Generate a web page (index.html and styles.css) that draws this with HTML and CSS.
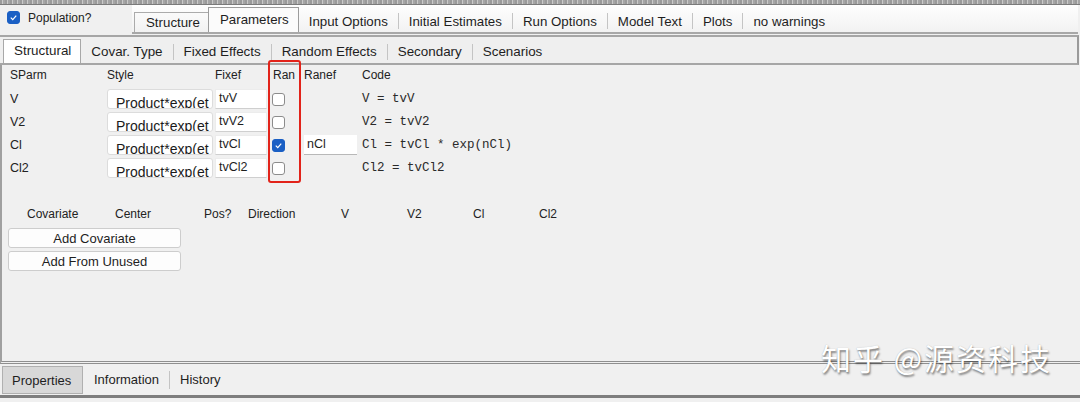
FILE: index.html
```html
<!DOCTYPE html>
<html>
<head>
<meta charset="utf-8">
<link rel="stylesheet" href="styles.css">
</head>
<body>
<div class="app">
  <div class="topline"></div>
  <div class="toprow">
    <div class="pop">
      <span class="cb checked small"><svg viewBox="0 0 12 12"><path d="M3 6.2 L5.2 8.3 L9 4" fill="none" stroke="#fff" stroke-width="1.3"/></svg></span>
      <span class="poplabel">Population?</span>
    </div>
    <div class="tabstrip">
      <div class="ttab side">Structure</div>
      <div class="ttab sel">Parameters</div>
      <div class="ttab">Input Options</div><span class="sep"></span>
      <div class="ttab">Initial Estimates</div><span class="sep"></span>
      <div class="ttab">Run Options</div><span class="sep"></span>
      <div class="ttab">Model Text</div><span class="sep"></span>
      <div class="ttab">Plots</div><span class="sep"></span>
      <div class="ttab">no warnings</div>
    </div>
  </div>
  <div class="subrow">
    <div class="stab sel">Structural</div>
    <div class="stab">Covar. Type</div><span class="sep"></span>
    <div class="stab">Fixed Effects</div><span class="sep"></span>
    <div class="stab">Random Effects</div><span class="sep"></span>
    <div class="stab">Secondary</div><span class="sep"></span>
    <div class="stab">Scenarios</div>
  </div>
  <div class="panel">
    <div class="grid">
      <div class="hd">SParm</div><div class="hd">Style</div><div class="hd">Fixef</div><div class="hd ran">Ran</div><div class="hd">Ranef</div><div class="hd">Code</div>

      <div class="lbl">V</div><div><div class="style">Product*exp(et</div></div><div><div class="fix">tvV</div></div><div><span class="cb"></span></div><div></div><div class="code">V = tvV</div>

      <div class="lbl">V2</div><div><div class="style">Product*exp(et</div></div><div><div class="fix">tvV2</div></div><div><span class="cb"></span></div><div></div><div class="code">V2 = tvV2</div>

      <div class="lbl">Cl</div><div><div class="style">Product*exp(et</div></div><div><div class="fix">tvCl</div></div><div><span class="cb checked"><svg viewBox="0 0 12 12"><path d="M3 6.2 L5.2 8.3 L9 4" fill="none" stroke="#fff" stroke-width="1.3"/></svg></span></div><div><div class="ranef">nCl</div></div><div class="code">Cl = tvCl * exp(nCl)</div>

      <div class="lbl">Cl2</div><div><div class="style">Product*exp(et</div></div><div><div class="fix">tvCl2</div></div><div><span class="cb"></span></div><div></div><div class="code">Cl2 = tvCl2</div>
    </div>
    <div class="highlight"></div>

    <div class="covhead">
      <span>Covariate</span><span>Center</span><span>Pos?</span><span>Direction</span><span>V</span><span>V2</span><span>Cl</span><span>Cl2</span>
    </div>
    <div class="btns">
      <button class="btn">Add Covariate</button>
      <button class="btn">Add From Unused</button>
    </div>
  </div>
  <div class="bottomrow">
    <div class="btab sel">Properties</div>
    <div class="btab">Information</div><span class="sep"></span>
    <div class="btab">History</div>
  </div>
  <div class="watermark">知乎 @源资科技</div>
</div>
</body>
</html>
```
FILE: styles.css
```css
* { box-sizing: border-box; }
html, body { margin: 0; padding: 0; }
body {
  width: 1080px;
  height: 402px;
  overflow: hidden;
  background: #f0f0f0;
  font-family: "Liberation Sans", Arial, sans-serif;
  font-size: 13px;
  color: #1e1e1e;
}
.app { position: relative; width: 1080px; height: 402px; }

.topline {
  height: 5px;
  background: repeating-linear-gradient(90deg, #9a9a9a 0 2px, #c9c9c9 2px 3px, #a5a5a5 3px 5px);
  border-bottom: 1px solid #7a7a7a;
}

.toprow { display: flex; height: 29px; }
.pop { width: 132px; display: flex; align-items: center; padding-left: 7px; gap: 8px; padding-bottom: 4px; }
.poplabel { font-size: 12px; color: #222; }

.tabstrip {
  flex: 1;
  display: flex;
  align-items: flex-end;
  margin-right: 2px;
  background: linear-gradient(#fefefe, #f2f2f2);
  border-bottom: 2px solid #a8a8a8;
  font-size: 13.3px;
}
.ttab { height: 20px; line-height: 19px; padding: 0 10px; white-space: nowrap; }
.ttab.side {
  margin-left: 2px;
  height: 20px;
  padding: 0 8px 0 11px;
  border-left: 1px solid #ababab;
  border-top: 1px solid #ababab;
}
.ttab.sel {
  height: 25px;
  line-height: 24px;
  padding: 0 9px 0 11px;
  background: #fbfbfb;
  border: 1px solid #9c9c9c;
  border-bottom: none;
}
.sep { width: 1px; height: 16px; background: #c4c4c4; align-self: flex-end; margin-bottom: 3px; }

.subrow {
  display: flex;
  align-items: flex-end;
  height: 30px;
  margin-top: 1px;
  margin-right: 1px;
  background: #efefef;
  border-top: 2px solid #a6a6a6;
  border-right: 2px solid #9a9a9a;
  border-bottom: 2px solid #a6a6a6;
  font-size: 13.4px;
}
.stab { height: 22px; line-height: 21px; padding: 0 10px; white-space: nowrap; }
.stab.sel {
  margin-left: 3px;
  height: 24px;
  line-height: 22px;
  background: #ffffff;
  border: 1px solid #a8a8a8;
  border-bottom: none;
  padding: 0 9px 0 10px;
}
.subrow .sep { margin-bottom: 3px; }

.panel {
  position: relative;
  height: 299px;
  border-left: 2px solid #a0a0a0;
  border-bottom: 3px double #8f8f8f;
  margin-left: 0;
  padding: 3px 0 0 8px;
}
.grid {
  display: grid;
  grid-template-columns: 97px 108px 56px 33px 58px auto;
  grid-template-rows: 19px repeat(4, 23px);
  row-gap: 0;
  align-items: center;
}
.hd { font-size: 12px; color: #222; padding-bottom: 6px; }
.hd.ran { padding-left: 2px; }
.lbl { font-size: 12.5px; color: #222; }
.style {
  width: 106px;
  height: 20px;
  background: #fff;
  border: 1px solid #dcdcdc;
  border-radius: 3px;
  padding: 4px 0 0 8px;
  font-size: 14px;
  line-height: 18px;
  overflow: hidden;
  white-space: nowrap;
  color: #1a1a1a;
}
.fix {
  width: 52px;
  height: 20px;
  background: #fff;
  border: 1px solid #ececec;
  border-bottom-color: #cfcfcf;
  padding-left: 3px;
  line-height: 16px;
  font-size: 12.5px;
  white-space: nowrap;
  overflow: hidden;
}
.ranef {
  width: 53px;
  height: 20px;
  background: #fff;
  border-bottom: 1px solid #b8b8b8;
  padding-left: 3px;
  line-height: 18px;
  font-size: 12.5px;
}
.code {
  font-family: "Liberation Mono", "Courier New", monospace;
  font-size: 12.5px;
  color: #2a2a2a;
  white-space: nowrap;
}
.cb {
  display: inline-block;
  width: 13px;
  height: 13px;
  border: 1px solid #8c8c8c;
  border-radius: 3px;
  background: #fff;
  margin-left: 1px;
  vertical-align: middle;
}
.cb.checked { background: #1a5fc4; border-color: #1a5fc4; }
.cb svg { display: block; width: 11px; height: 11px; }
.cb.small { width: 13px; height: 13px; margin-left: 0; }

.highlight {
  position: absolute;
  left: 266px;
  top: -5px;
  width: 33px;
  height: 123px;
  border: 2.5px solid #e2231a;
  border-radius: 3px;
}

.covhead {
  display: grid;
  grid-template-columns: 88px 89px 44px 93px 66px 66px 66px auto;
  margin-top: 28px;
  padding-left: 17px;
  font-size: 12px;
  color: #222;
  height: 16px;
}
.btns { display: flex; flex-direction: column; gap: 3px; margin-top: 5px; }
.btn {
  width: 173px;
  height: 20px;
  margin-left: -2px;
  background: #fdfdfd;
  border: 1px solid #cdcdcd;
  border-radius: 3px;
  font-family: "Liberation Sans", Arial, sans-serif;
  font-size: 13px;
  color: #1e1e1e;
  padding: 1px 0 0;
  line-height: 17px;
}

.bottomrow {
  display: flex;
  align-items: center;
  height: 34px;
  padding: 0 0 0 2px;
  border-bottom: 3px solid #7e7e7e;
}
.btab { height: 28px; line-height: 27px; padding: 0 10px; white-space: nowrap; }
.btab.sel {
  width: 81px;
  padding-left: 9px;
  background: #d8d8d8;
  border: 1px solid #b0b0b0;
  margin-right: 1px;
}
.bottomrow .sep { align-self: center; margin: 0; height: 18px; }

.watermark {
  position: absolute;
  left: 821px;
  top: 335px;
  font-family: "Noto Sans CJK SC", sans-serif;
  font-size: 30px;
  letter-spacing: 2px;
  color: #ffffff;
  text-shadow: 1px 2px 2px rgba(0,0,0,0.45), 0 0 1px rgba(0,0,0,0.25);
  white-space: nowrap;
}
```
